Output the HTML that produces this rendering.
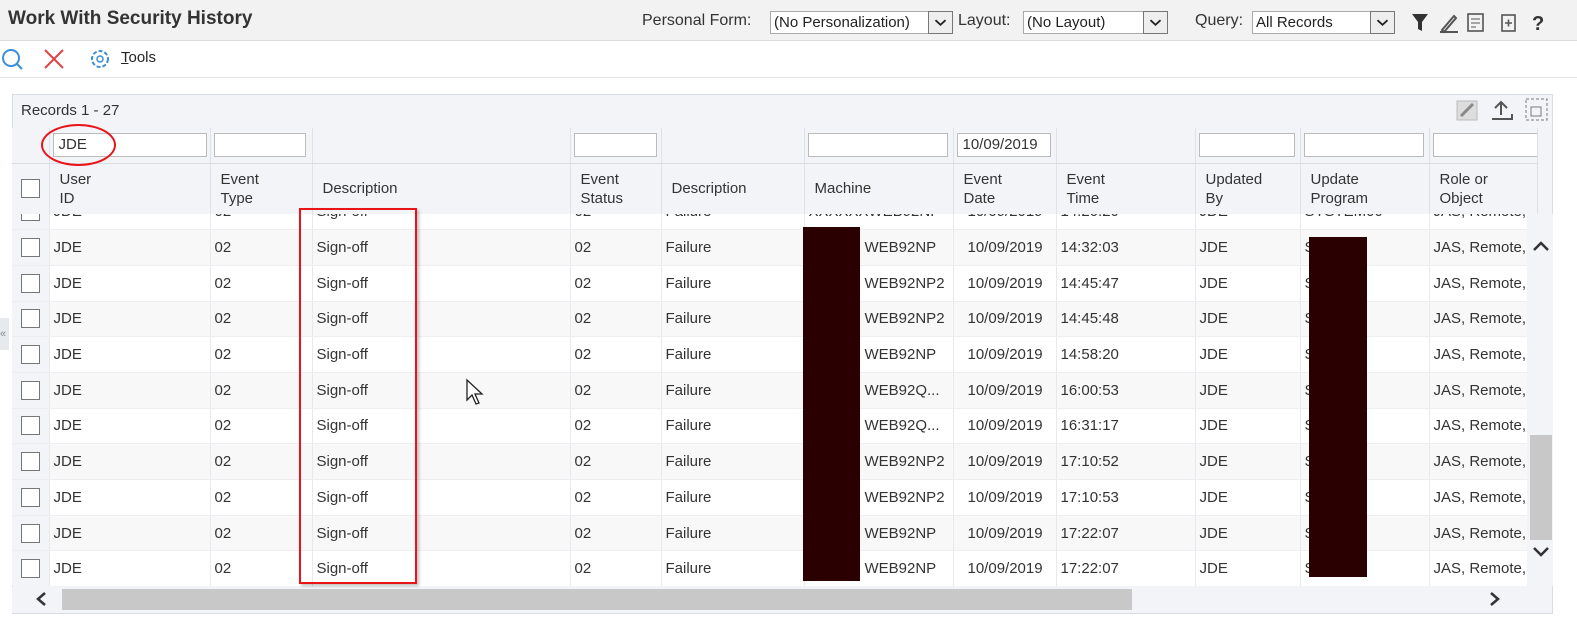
<!DOCTYPE html>
<html><head><meta charset="utf-8"><style>
*{box-sizing:border-box;margin:0;padding:0}
body{width:1577px;height:617px;overflow:hidden;background:#fff;font-family:"Liberation Sans",sans-serif;position:relative;color:#333}
.a{position:absolute}
.top{left:0;top:0;width:1577px;height:41px;background:#f2f2f2;border-bottom:1px solid #dcdcdc}
.title{left:8px;top:8px;font-size:19px;font-weight:bold;color:#333}
.lbl{font-size:16px;color:#333;top:12px}
.sel{top:11px;height:23px;border:1px solid #aaa;background:#fff;font-size:15px;padding:2px 3px;color:#222}
.dd{top:11px;width:25px;height:23px;border:1px solid #777;background:#eee}
table{border-collapse:collapse;table-layout:fixed;position:absolute;left:12px}
td{font-size:15px;color:#333;padding-left:4px;border-right:1px solid #e6e9ee;border-bottom:1px solid #eceef1;white-space:nowrap;overflow:hidden;height:35.7px}
tr.g td{background:#f8f8f8}
tr.w td{background:#fff}
td.cb{background:#f2f4f7 !important;padding-left:9px}
.box{display:inline-block;width:19px;height:19px;border:1px solid #777;background:#fff;vertical-align:middle}
.hd td{background:#f2f4f7;height:51px;font-size:15px;line-height:19px;color:#333;border-right:1px solid #dde2e8;border-bottom:1px solid #d8dde3;padding-left:10px}
.fl td{background:#f2f4f7;height:35px;border-right:1px solid #dde2e8;border-bottom:1px solid #d8dde3;padding:0 3px}
.inp{height:24px;border:1px solid #bbb;background:#fff;font-size:15px;padding:2px 5px;width:100%}
</style></head><body>
<div class="a top"></div>
<div class="a title">Work With Security History</div>
<div class="a lbl" style="left:642px">Personal Form:</div>
<div class="a sel" style="left:770px;width:160px">(No Personalization)</div>
<svg class="a dd" style="left:928px" viewBox="0 0 25 23"><path d="M7 9l5.5 5 5.5-5" stroke="#222" stroke-width="2" fill="none"/></svg>
<div class="a lbl" style="left:958px">Layout:</div>
<div class="a sel" style="left:1023px;width:143px">(No Layout)</div>
<svg class="a dd" style="left:1143px" viewBox="0 0 25 23"><path d="M7 9l5.5 5 5.5-5" stroke="#222" stroke-width="2" fill="none"/></svg>
<div class="a lbl" style="left:1195px">Query:</div>
<div class="a sel" style="left:1252px;width:122px">All Records</div>
<svg class="a dd" style="left:1370px" viewBox="0 0 25 23"><path d="M7 9l5.5 5 5.5-5" stroke="#222" stroke-width="2" fill="none"/></svg>
<svg class="a" style="left:1410px;top:12px" width="140" height="22"><path d="M2 2h16l-6 8v9l-4-2v-7z" fill="#333"/><path d="M32 18l12-14 2 2-12 14z M30 20h18" stroke="#555" stroke-width="2" fill="none"/><rect x="58" y="2" width="15" height="17" fill="none" stroke="#555" stroke-width="1.6"/><path d="M61 7h9M61 11h9M61 15h5" stroke="#555"/><rect x="92" y="3" width="13" height="16" fill="none" stroke="#555" stroke-width="1.6"/><path d="M95 11h7M98.5 7.5v7" stroke="#555" stroke-width="1.6"/><text x="122" y="18" font-size="20" font-weight="bold" fill="#333" font-family="Liberation Sans">?</text></svg>
<svg class="a" style="left:0;top:47px" width="170" height="24"><circle cx="11" cy="11" r="8" stroke="#3a8fd6" stroke-width="2" fill="none"/><path d="M17 17l5 5" stroke="#3a8fd6" stroke-width="2"/><path d="M45 3l18 18M63 3L45 21" stroke="#e04444" stroke-width="2"/><circle cx="100" cy="12" r="8" stroke="#3a8fd6" stroke-width="2" fill="none" stroke-dasharray="4 2"/><circle cx="100" cy="12" r="3" stroke="#3a8fd6" stroke-width="1.5" fill="none"/></svg>
<div class="a" style="left:121px;top:49px;font-size:15px;color:#222"><u>T</u>ools</div>
<div class="a" style="left:0;top:77px;width:1577px;height:1px;background:#e2e2e2"></div>
<div class="a" style="left:12px;top:94px;width:1541px;height:520px;border:1px solid #d8dde3;background:#f2f4f7"></div>
<div class="a" style="left:21px;top:102px;font-size:15px;color:#333">Records 1 - 27</div>
<svg class="a" style="left:1455px;top:97px" width="95" height="28"><rect x="2" y="4" width="20" height="19" fill="#ddd" stroke="#bbb"/><path d="M6 19l12-12" stroke="#888" stroke-width="3"/><path d="M46 6v12M40 11l6-6 6 6M37 22h20v-5" stroke="#555" stroke-width="2" fill="none"/><rect x="71" y="2" width="21" height="21" fill="none" stroke="#777" stroke-dasharray="3 2"/><rect x="76" y="10" width="10" height="9" fill="none" stroke="#777"/></svg>
<table style="top:128px;width:1525px">
<colgroup><col style="width:37px"><col style="width:161px"><col style="width:102px"><col style="width:258px"><col style="width:91px"><col style="width:143px"><col style="width:149px"><col style="width:103px"><col style="width:139px"><col style="width:105px"><col style="width:129px"><col style="width:108px"></colgroup>
<tr class="fl"><td></td><td><div class="inp">JDE</div></td><td><div class="inp" style="width:92px"></div></td><td></td><td><div class="inp" style="width:83px"></div></td><td></td><td><div class="inp" style="width:140px"></div></td><td><div class="inp" style="width:94px">10/09/2019</div></td><td></td><td><div class="inp" style="width:96px"></div></td><td><div class="inp" style="width:120px"></div></td><td><div class="inp" style="width:110px"></div></td></tr>
<tr class="hd"><td style="padding-left:9px"><span class="box"></span></td><td>User<br>ID</td><td>Event<br>Type</td><td>Description</td><td>Event<br>Status</td><td>Description</td><td>Machine</td><td>Event<br>Date</td><td>Event<br>Time</td><td>Updated<br>By</td><td>Update<br>Program</td><td>Role or<br>Object</td></tr>
</table>
<div class="a" style="left:12px;top:214px;width:1515px;height:372px;overflow:hidden">
<table style="left:0;top:-20px;width:1525px">
<colgroup><col style="width:37px"><col style="width:161px"><col style="width:102px"><col style="width:258px"><col style="width:91px"><col style="width:143px"><col style="width:149px"><col style="width:103px"><col style="width:139px"><col style="width:105px"><col style="width:129px"><col style="width:108px"></colgroup>
<tr class="w"><td class="cb"><span class="box"></span></td><td>JDE</td><td>02</td><td>Sign-off</td><td>02</td><td>Failure</td><td>XXXXXXWEB92NP</td><td style="padding-left:14px">10/09/2019</td><td>14:20:20</td><td>JDE</td><td>SYSTEM00</td><td>JAS, Remote, </td></tr>
<tr class="g"><td class="cb"><span class="box"></span></td><td>JDE</td><td>02</td><td>Sign-off</td><td>02</td><td>Failure</td><td style="padding-left:60px">WEB92NP</td><td style="padding-left:14px">10/09/2019</td><td>14:32:03</td><td>JDE</td><td>S</td><td>JAS, Remote, </td></tr>
<tr class="w"><td class="cb"><span class="box"></span></td><td>JDE</td><td>02</td><td>Sign-off</td><td>02</td><td>Failure</td><td style="padding-left:60px">WEB92NP2</td><td style="padding-left:14px">10/09/2019</td><td>14:45:47</td><td>JDE</td><td>S</td><td>JAS, Remote, </td></tr>
<tr class="g"><td class="cb"><span class="box"></span></td><td>JDE</td><td>02</td><td>Sign-off</td><td>02</td><td>Failure</td><td style="padding-left:60px">WEB92NP2</td><td style="padding-left:14px">10/09/2019</td><td>14:45:48</td><td>JDE</td><td>S</td><td>JAS, Remote, </td></tr>
<tr class="w"><td class="cb"><span class="box"></span></td><td>JDE</td><td>02</td><td>Sign-off</td><td>02</td><td>Failure</td><td style="padding-left:60px">WEB92NP</td><td style="padding-left:14px">10/09/2019</td><td>14:58:20</td><td>JDE</td><td>S</td><td>JAS, Remote, </td></tr>
<tr class="g"><td class="cb"><span class="box"></span></td><td>JDE</td><td>02</td><td>Sign-off</td><td>02</td><td>Failure</td><td style="padding-left:60px">WEB92Q...</td><td style="padding-left:14px">10/09/2019</td><td>16:00:53</td><td>JDE</td><td>S</td><td>JAS, Remote, </td></tr>
<tr class="w"><td class="cb"><span class="box"></span></td><td>JDE</td><td>02</td><td>Sign-off</td><td>02</td><td>Failure</td><td style="padding-left:60px">WEB92Q...</td><td style="padding-left:14px">10/09/2019</td><td>16:31:17</td><td>JDE</td><td>S</td><td>JAS, Remote, </td></tr>
<tr class="g"><td class="cb"><span class="box"></span></td><td>JDE</td><td>02</td><td>Sign-off</td><td>02</td><td>Failure</td><td style="padding-left:60px">WEB92NP2</td><td style="padding-left:14px">10/09/2019</td><td>17:10:52</td><td>JDE</td><td>S</td><td>JAS, Remote, </td></tr>
<tr class="w"><td class="cb"><span class="box"></span></td><td>JDE</td><td>02</td><td>Sign-off</td><td>02</td><td>Failure</td><td style="padding-left:60px">WEB92NP2</td><td style="padding-left:14px">10/09/2019</td><td>17:10:53</td><td>JDE</td><td>S</td><td>JAS, Remote, </td></tr>
<tr class="g"><td class="cb"><span class="box"></span></td><td>JDE</td><td>02</td><td>Sign-off</td><td>02</td><td>Failure</td><td style="padding-left:60px">WEB92NP</td><td style="padding-left:14px">10/09/2019</td><td>17:22:07</td><td>JDE</td><td>S</td><td>JAS, Remote, </td></tr>
<tr class="w"><td class="cb"><span class="box"></span></td><td>JDE</td><td>02</td><td>Sign-off</td><td>02</td><td>Failure</td><td style="padding-left:60px">WEB92NP</td><td style="padding-left:14px">10/09/2019</td><td>17:22:07</td><td>JDE</td><td>S</td><td>JAS, Remote, </td></tr>
</table></div>
<div class="a" style="left:1527px;top:214px;width:26px;height:372px;background:#f2f4f7"></div>
<svg class="a" style="left:1531px;top:238px" width="20" height="16"><path d="M3 12l7-7 7 7" stroke="#333" stroke-width="2.5" fill="none"/></svg>
<div class="a" style="left:1530px;top:435px;width:22px;height:105px;background:#c8c8c8"></div>
<svg class="a" style="left:1531px;top:544px" width="20" height="16"><path d="M3 4l7 7 7-7" stroke="#333" stroke-width="2.5" fill="none"/></svg>
<div class="a" style="left:12px;top:587px;width:1515px;height:26px;background:#f2f4f7"></div>
<div class="a" style="left:62px;top:589px;width:1070px;height:21px;background:#c8c8c8"></div>
<svg class="a" style="left:34px;top:591px" width="16" height="16"><path d="M11 2L4 8l7 6" stroke="#333" stroke-width="2.5" fill="none"/></svg>
<svg class="a" style="left:1486px;top:591px" width="16" height="16"><path d="M5 2l7 6-7 6" stroke="#333" stroke-width="2.5" fill="none"/></svg>
<div class="a" style="left:0;top:318px;width:9px;height:32px;background:#e6e9ee;font-size:11px;color:#888;line-height:32px">«</div>
<div class="a" style="left:803px;top:227px;width:57px;height:354px;background:#2b0000"></div>
<div class="a" style="left:1309px;top:237px;width:58px;height:340px;background:#2b0000"></div>
<div class="a" style="left:299px;top:208px;width:118px;height:376px;border:2px solid #e8141a;box-shadow:2px 2px 3px rgba(0,0,0,.25)"></div>
<div class="a" style="left:41px;top:124px;width:75px;height:42px;border:2px solid #e8141a;border-radius:50%"></div>
<svg class="a" style="left:465px;top:378px" width="20" height="30"><path d="M2 2v20l5-5 4 9 3-1-4-9h7z" fill="#fff" stroke="#222" stroke-width="1.3"/></svg>
</body></html>
